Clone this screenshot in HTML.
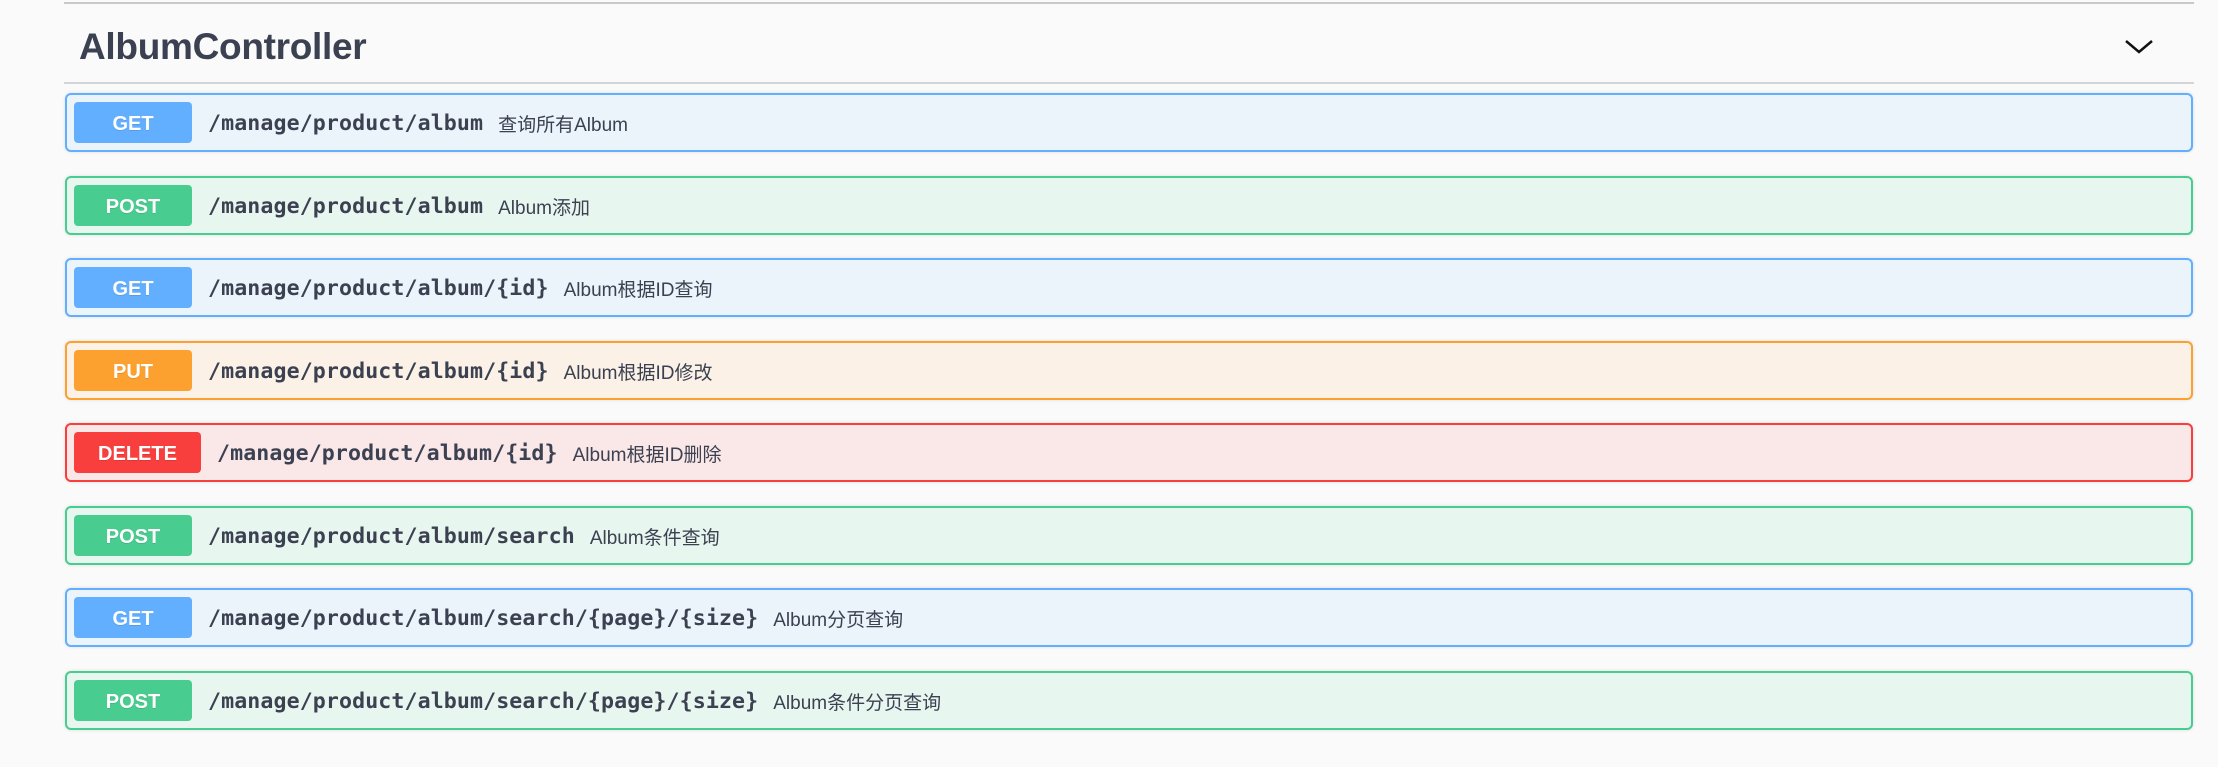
<!DOCTYPE html>
<html><head><meta charset="utf-8"><style>
body{margin:0;background:#fafafa;width:2218px;height:767px;overflow:hidden;font-family:"Liberation Sans","Noto Sans CJK SC",sans-serif;}
.top{position:absolute;left:64px;width:2130px;top:2px;border-top:2px solid #c8c8cc}
.hdr{position:absolute;left:64px;width:2130px;top:82px;border-top:2px solid #d5d5d8}
.title{position:absolute;left:79px;top:26px;font-size:37px;font-weight:bold;color:#3b4151;letter-spacing:-0.3px}
.chev{position:absolute;left:2124px;top:37px}
.row{position:absolute;left:65px;width:2124px;height:55px;border:2px solid;border-radius:6px;box-sizing:content-box;display:flex;align-items:center;box-shadow:0 0 3px rgba(0,0,0,.12)}
.b{margin-left:7px;width:118px;height:41px;border-radius:4px;color:#fff;font-weight:bold;font-size:20px;display:flex;align-items:center;justify-content:center;text-shadow:0 1px 0 rgba(0,0,0,.1);padding-top:3px;box-sizing:border-box}
.p{margin-left:16px;font-family:"DejaVu Sans Mono","Liberation Mono",monospace;font-weight:bold;font-size:21.6px;color:#3b4151;letter-spacing:0.1px;padding-top:2px}
.d{margin-left:15px;font-size:19px;color:#3b4151;padding-top:2px}
.get{border-color:#61affe;background:#ebf3fb}.get .b{background:#61affe}
.post{border-color:#49cc90;background:#e8f6f0}.post .b{background:#49cc90}
.put{border-color:#fca130;background:#fbf1e6}.put .b{background:#fca130}
.del{border-color:#f93e3e;background:#fae7e7}.del .b{background:#f93e3e;width:127px}
</style></head><body>
<div class="top"></div>
<div class="title">AlbumController</div>
<svg class="chev" width="30" height="20" viewBox="0 0 30 20"><path d="M2 4 L15 15 L28 4" fill="none" stroke="#111" stroke-width="2.5"/></svg>
<div class="hdr"></div>
<div class="row get" style="top:93px"><div class="b">GET</div><div class="p">/manage/product/album</div><div class="d">查询所有Album</div></div>
<div class="row post" style="top:176px"><div class="b">POST</div><div class="p">/manage/product/album</div><div class="d">Album添加</div></div>
<div class="row get" style="top:258px"><div class="b">GET</div><div class="p">/manage/product/album/{id}</div><div class="d">Album根据ID查询</div></div>
<div class="row put" style="top:341px"><div class="b">PUT</div><div class="p">/manage/product/album/{id}</div><div class="d">Album根据ID修改</div></div>
<div class="row del" style="top:423px"><div class="b">DELETE</div><div class="p">/manage/product/album/{id}</div><div class="d">Album根据ID删除</div></div>
<div class="row post" style="top:506px"><div class="b">POST</div><div class="p">/manage/product/album/search</div><div class="d">Album条件查询</div></div>
<div class="row get" style="top:588px"><div class="b">GET</div><div class="p">/manage/product/album/search/{page}/{size}</div><div class="d">Album分页查询</div></div>
<div class="row post" style="top:671px"><div class="b">POST</div><div class="p">/manage/product/album/search/{page}/{size}</div><div class="d">Album条件分页查询</div></div>
</body></html>
